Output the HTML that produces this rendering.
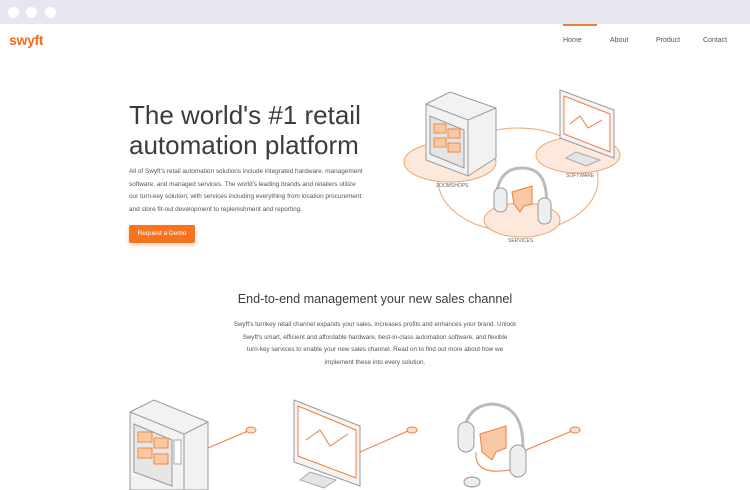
<!DOCTYPE html>
<html><head><style>
*{margin:0;padding:0;box-sizing:border-box}
body{width:750px;height:490px;overflow:hidden;background:#fff;font-family:"Liberation Sans",sans-serif;position:relative;color:#333}
.bar{position:absolute;left:0;top:0;width:750px;height:24px;background:#e6e6f0}
.dot{position:absolute;top:7px;width:11px;height:11px;border-radius:50%;background:#fff}
.logo{position:absolute;left:9px;top:32px;color:#f26b1d;font-size:14px;font-weight:bold;letter-spacing:-0.3px}
.nav{position:absolute;top:37px;font-size:7px;color:#555}
.ind{position:absolute;left:563px;top:24px;width:34px;height:2px;background:#f07d3c}
h1{position:absolute;left:129px;top:100px;font-size:26px;font-weight:normal;line-height:30px;color:#3c3c3c;width:260px}
.p1{position:absolute;left:129px;top:166px;font-size:6.4px;line-height:12.7px;color:#555;white-space:nowrap}
.btn{position:absolute;left:129px;top:225px;width:66px;height:18px;background:#f7731e;border-radius:2px;color:#fff;font-size:6.5px;text-align:center;line-height:18px;box-shadow:0 2px 4px rgba(240,110,30,.35)}
h2{position:absolute;left:0;width:750px;top:292px;text-align:center;font-size:12.6px;font-weight:normal;color:#3c3c3c}
.p2{position:absolute;left:175px;width:400px;top:319px;text-align:center;font-size:6.3px;line-height:12.7px;color:#555;white-space:nowrap}
svg{position:absolute}
</style></head><body>
<div class="bar"></div>
<div class="dot" style="left:8px"></div><div class="dot" style="left:26px"></div><div class="dot" style="left:45px"></div>
<div class="logo">swyft</div>
<div class="ind"></div>
<div class="nav" style="left:563px">Home</div>
<div class="nav" style="left:610px">About</div>
<div class="nav" style="left:656px">Product</div>
<div class="nav" style="left:703px">Contact</div>
<h1>The world's #1 retail automation platform</h1>
<div class="p1">All of Swyft's retail automation solutions include integrated hardware, management<br>software, and managed services. The world's leading brands and retailers utilize<br>our turn-key solution; with services including everything from location procurement<br>and store fit-out development to replenishment and reporting.</div>
<div class="btn">Request a Demo</div>
<h2>End-to-end management your new sales channel</h2>
<div class="p2">Swyft's turnkey retail channel expands your sales, increases profits and enhances your brand. Unlock<br>Swyft's smart, efficient and affordable hardware, best-in-class automation software, and flexible<br>turn-key services to enable your new sales channel. Read on to find out more about how we<br>implement these into every solution.</div>

<svg style="left:400px;top:80px" width="240" height="170" viewBox="0 0 240 170">
<ellipse cx="118" cy="100" rx="80" ry="52" fill="none" stroke="#f0a56e" stroke-width="1"/>
<ellipse cx="50" cy="82" rx="46" ry="20" fill="#fde9db" stroke="#f0a56e"/>
<ellipse cx="178" cy="75" rx="42" ry="18" fill="#fde9db" stroke="#f0a56e"/>
<ellipse cx="122" cy="140" rx="38" ry="17" fill="#fde9db" stroke="#f0a56e"/>
<path d="M26 24 L50 12 L96 28 L96 78 L68 96 L26 80 Z" fill="#f2f2f2" stroke="#999"/>
<path d="M26 24 L68 40 L96 28" fill="none" stroke="#999"/>
<line x1="68" y1="40" x2="68" y2="96" stroke="#999"/>
<path d="M30 36 L64 50 L64 88 L30 74Z" fill="#e4e4e4" stroke="#999"/>
<rect x="34" y="44" width="12" height="9" fill="#f9c9a5" stroke="#f08a44"/><rect x="48" y="49" width="12" height="9" fill="#f9c9a5" stroke="#f08a44"/>
<rect x="34" y="58" width="12" height="9" fill="#f9c9a5" stroke="#f08a44"/><rect x="48" y="63" width="12" height="9" fill="#f9c9a5" stroke="#f08a44"/>
<path d="M160 10 L214 30 L214 78 L160 58Z" fill="#f4f4f4" stroke="#999"/>
<path d="M164 16 L210 34 L210 72 L164 54Z" fill="#fff" stroke="#f07d3c"/>
<path d="M170 44 L180 36 L188 48 L202 40" fill="none" stroke="#f07d3c"/>
<path d="M176 72 L200 80 L186 86 L166 78Z" fill="#e5e5e5" stroke="#aaa"/>
<path d="M96 130 Q94 88 122 88 Q150 88 146 130" fill="none" stroke="#bbb" stroke-width="3"/>
<rect x="94" y="108" width="13" height="24" rx="6" fill="#eee" stroke="#999"/>
<rect x="138" y="118" width="13" height="26" rx="6" fill="#eee" stroke="#999"/>
<path d="M112 112 L132 106 L132 124 L124 126 L120 132 L114 124Z" fill="#f9c9a5" stroke="#f07d3c"/>
<text x="36" y="107" font-size="5" fill="#666" font-family="Liberation Sans">ZOOMSHOPS</text>
<text x="166" y="97" font-size="5" fill="#666" font-family="Liberation Sans">SOFTWARE</text>
<text x="108" y="162" font-size="5" fill="#666" font-family="Liberation Sans">SERVICES</text>
</svg>

<svg style="left:110px;top:390px" width="500" height="100" viewBox="0 0 500 100">
<path d="M20 22 L44 10 L98 32 L98 100 L20 100Z" fill="#f2f2f2" stroke="#999"/>
<path d="M20 22 L74 44 L98 32" fill="none" stroke="#999"/>
<line x1="74" y1="44" x2="74" y2="100" stroke="#999"/>
<path d="M24 34 L62 50 L62 96 L24 82Z" fill="#e6e6e6" stroke="#999"/>
<rect x="28" y="42" width="14" height="10" fill="#f9c9a5" stroke="#f08a44"/><rect x="44" y="48" width="14" height="10" fill="#f9c9a5" stroke="#f08a44"/>
<rect x="28" y="58" width="14" height="10" fill="#f9c9a5" stroke="#f08a44"/><rect x="44" y="64" width="14" height="10" fill="#f9c9a5" stroke="#f08a44"/>
<rect x="64" y="50" width="7" height="24" fill="#fff" stroke="#aaa"/>
<line x1="98" y1="58" x2="138" y2="41" stroke="#f07d3c"/><ellipse cx="141" cy="40" rx="5" ry="3" fill="#fde0cc" stroke="#f07d3c"/>
<path d="M184 10 L250 36 L250 96 L184 72Z" fill="#f4f4f4" stroke="#999"/>
<path d="M188 16 L246 40 L246 88 L188 66Z" fill="#fff" stroke="#f07d3c"/>
<path d="M196 50 L210 40 L220 56 L238 44" fill="none" stroke="#f07d3c"/>
<path d="M200 82 L226 90 L214 98 L190 90Z" fill="#e5e5e5" stroke="#aaa"/>
<line x1="250" y1="62" x2="298" y2="41" stroke="#f07d3c"/><ellipse cx="302" cy="40" rx="5" ry="3" fill="#fde0cc" stroke="#f07d3c"/>
<path d="M354 60 Q350 16 382 14 Q418 16 412 70" fill="none" stroke="#bbb" stroke-width="3"/>
<rect x="348" y="32" width="16" height="30" rx="8" fill="#eee" stroke="#999"/>
<rect x="400" y="55" width="16" height="32" rx="8" fill="#eee" stroke="#999"/>
<path d="M370 44 L396 36 L396 58 L386 62 L382 70 L372 62Z" fill="#f9c9a5" stroke="#f07d3c"/>
<path d="M366 62 Q364 86 400 80" fill="none" stroke="#f07d3c"/>
<ellipse cx="362" cy="92" rx="8" ry="5" fill="#eee" stroke="#999"/>
<line x1="416" y1="60" x2="462" y2="41" stroke="#f07d3c"/><ellipse cx="465" cy="40" rx="5" ry="3" fill="#fde0cc" stroke="#f07d3c"/>
</svg>
</body></html>
